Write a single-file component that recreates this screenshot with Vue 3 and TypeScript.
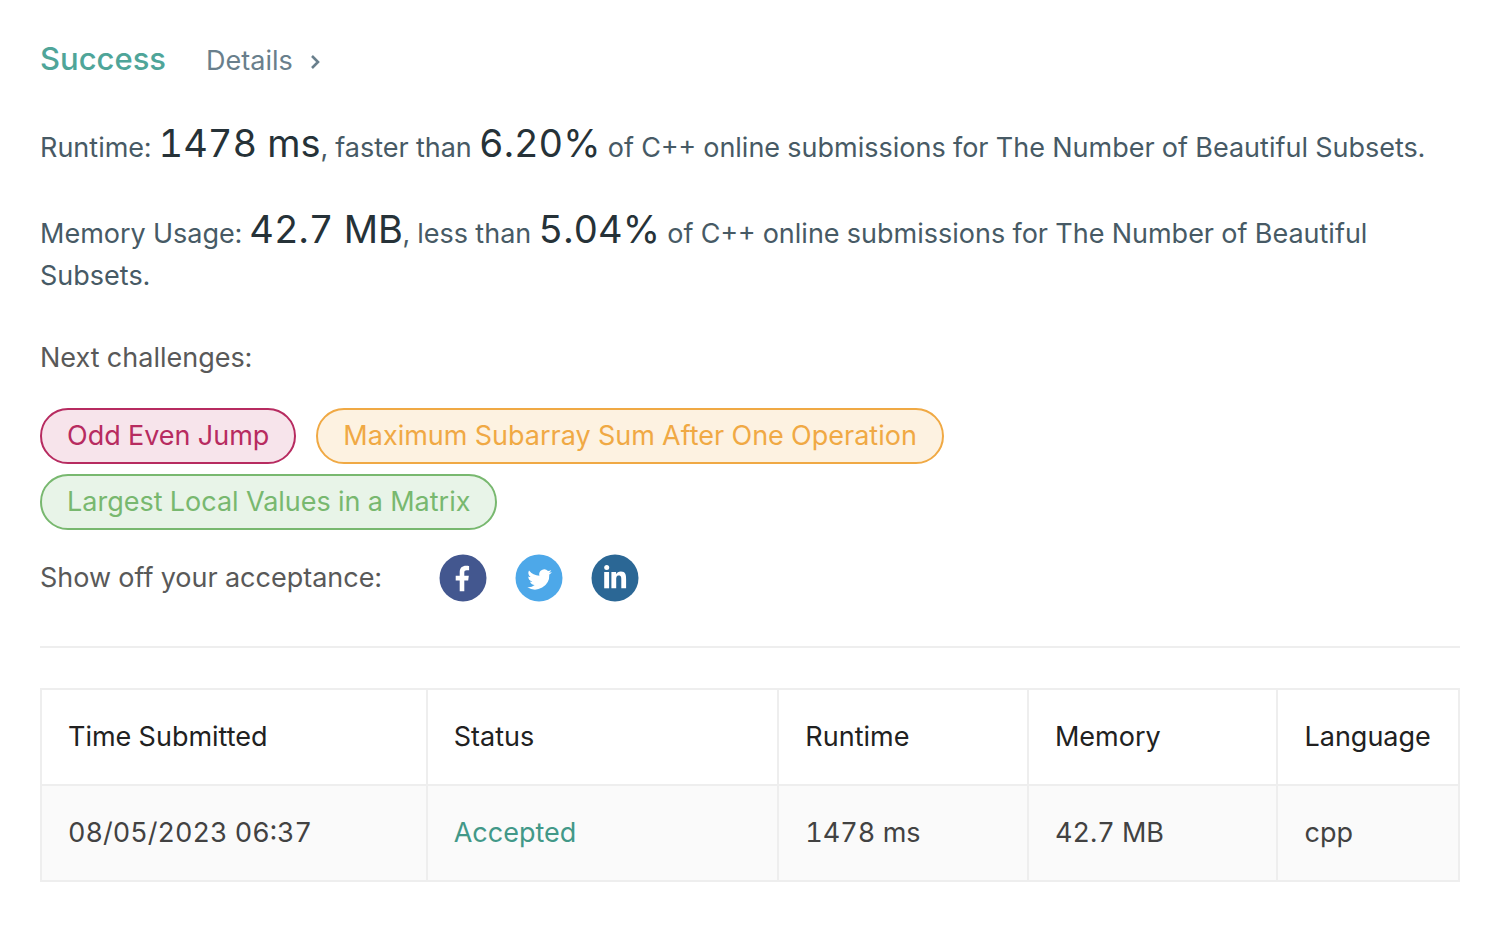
<script setup lang="ts">
interface Challenge {
  title: string
  level: 'easy' | 'medium' | 'hard'
}

interface Submission {
  time: string
  status: string
  runtime: string
  memory: string
  language: string
}

const challenges: Challenge[] = [
  { title: 'Odd Even Jump', level: 'hard' },
  { title: 'Maximum Subarray Sum After One Operation', level: 'medium' },
  { title: 'Largest Local Values in a Matrix', level: 'easy' },
]

const columns: string[] = ['Time Submitted', 'Status', 'Runtime', 'Memory', 'Language']

const submissions: Submission[] = [
  { time: '08/05/2023 06:37', status: 'Accepted', runtime: '1478 ms', memory: '42.7 MB', language: 'cpp' },
]
</script>

<template>
  <main class="result">
    <header class="heading">
      <h1 class="verdict">Success</h1>
      <a class="details" href="#details">
        Details
        <svg class="chevron" viewBox="0 0 12 16" aria-hidden="true">
          <path d="M2 2l6 6-6 6" fill="none" stroke="currentColor" stroke-width="2.6" />
        </svg>
      </a>
    </header>

    <p class="stat">
      Runtime: <span class="figure">1478 ms</span>, faster than <span class="figure">6.20%</span> of C++ online
      submissions for The Number of Beautiful Subsets.
    </p>
    <p class="stat">
      Memory Usage: <span class="figure">42.7 MB</span>, less than <span class="figure">5.04%</span> of C++ online
      submissions for The Number of Beautiful Subsets.
    </p>

    <h2 class="label">Next challenges:</h2>
    <nav class="challenges" aria-label="Next challenges">
      <a v-for="item in challenges" :key="item.title" href="#challenge" class="pill" :class="item.level">{{ item.title }}</a>
    </nav>

    <section class="share">
      <span class="label">Show off your acceptance:</span>
      <div class="networks">
        <button class="network" type="button" aria-label="Share on Facebook">
          <svg viewBox="0 0 48 48" aria-hidden="true">
            <circle cx="24" cy="24" r="23.5" fill="#43578f" />
            <path d="M20.700 37.200V26.400h-4v-4.700h4v-3.500c0-4.400 2.500-6.500 6.400-6.500 1.300 0 2.500.1 3 .2v4.300h-2.300c-1.800 0-2.500.8-2.500 2.300v3.200h4.500l-.6 4.700h-3.900v10.800z" fill="#fff" />
          </svg>
        </button>
        <button class="network" type="button" aria-label="Share on Twitter">
          <svg viewBox="0 0 48 48" aria-hidden="true">
            <circle cx="24" cy="24" r="23.5" fill="#4da8e9" />
            <path transform="translate(12.3 13.2)" d="M24.600 4.700a10 10 0 0 1-2.900.8 5 5 0 0 0 2.200-2.800 10 10 0 0 1-3.200 1.200 5 5 0 0 0-8.600 4.600A14.300 14.300 0 0 1 1.700 3.200a5 5 0 0 0 1.600 6.700 5 5 0 0 1-2.300-.6 5 5 0 0 0 4 5 5 5 0 0 1-2.300.1 5 5 0 0 0 4.700 3.500 10.100 10.100 0 0 1-7.400 2.100 14.300 14.300 0 0 0 22-12.700 10 10 0 0 0 2.600-2.600z" fill="#fff" />
          </svg>
        </button>
        <button class="network" type="button" aria-label="Share on LinkedIn">
          <svg viewBox="0 0 48 48" aria-hidden="true">
            <circle cx="24" cy="24" r="23.5" fill="#2b6795" />
            <g fill="#fff">
              <circle cx="15.7" cy="13.6" r="2.5" />
              <rect x="13.2" y="18" width="4.900" height="16.300" />
              <path d="M20.400 18h4.700v2.200c.7-1.300 2.400-2.600 4.800-2.600 4.700 0 5.200 3.400 5.200 7.300v9.400h-4.800v-8.400c0-2 0-4.300-2.400-4.300-2.500 0-2.700 2-2.700 4.200v8.500h-4.800z" />
            </g>
          </svg>
        </button>
      </div>
    </section>

    <hr class="rule" />

    <table class="submissions">
      <colgroup>
        <col class="col-time" />
        <col class="col-status" />
        <col class="col-figure" />
        <col class="col-figure" />
        <col />
      </colgroup>
      <thead>
        <tr>
          <th v-for="name in columns" :key="name" scope="col">{{ name }}</th>
        </tr>
      </thead>
      <tbody>
        <tr v-for="row in submissions" :key="row.time">
          <td>{{ row.time }}</td>
          <td><a class="accepted" href="#submission">{{ row.status }}</a></td>
          <td>{{ row.runtime }}</td>
          <td>{{ row.memory }}</td>
          <td>{{ row.language }}</td>
        </tr>
      </tbody>
    </table>
  </main>
</template>

<style>
body {
  margin: 0;
  background: #fff;
}
</style>

<style scoped>
.result {
  padding: 38px 34px 64px 40px;
  font-family: Inter, 'Liberation Sans', sans-serif;
  font-size: 27px;
  font-variant-numeric: tabular-nums;
  line-height: 42px;
  color: #424242;
}

a {
  color: inherit;
  text-decoration: none;
}

.heading {
  display: flex;
  align-items: baseline;
  gap: 40px;
}

.verdict {
  margin: 0;
  font-size: 31px;
  font-weight: 500;
  line-height: 42px;
  color: #4fa599;
}

.details {
  color: #697f8c;
}

.chevron {
  width: 12px;
  height: 16px;
  margin-left: 10px;
}

.stat {
  margin: 40px 0 0;
  color: #475a65;
}

.stat + .stat {
  margin-top: 39px;
}

.figure {
  font-size: 38px;
  color: #263238;
}

.label {
  margin: 0;
  font-size: 27px;
  font-weight: 400;
  color: #595959;
}

h2.label {
  margin-top: 40px;
}

.challenges {
  display: flex;
  flex-wrap: wrap;
  gap: 10px 20px;
  max-width: 1000px;
  margin-top: 29px;
}

.pill {
  padding: 5px 25px;
  border: 2px solid;
  border-radius: 28px;
}

.hard {
  color: #b72b60;
  background: #f7e4eb;
}

.medium {
  color: #f0a944;
  background: #fdf2e1;
}

.easy {
  color: #78b86f;
  background: #e8f4e8;
}

.share {
  display: flex;
  align-items: center;
  gap: 57px;
  margin-top: 24px;
}

.networks {
  display: flex;
  gap: 28px;
}

.network {
  width: 48px;
  height: 48px;
  padding: 0;
  border: 0;
  background: none;
  cursor: pointer;
}

.network svg {
  display: block;
}

.rule {
  height: 2px;
  margin: 44px 0 40px;
  border: 0;
  background: #eee;
}

.submissions {
  width: 100%;
  table-layout: fixed;
  border-collapse: collapse;
}

.col-time {
  width: 27.2%;
}

.col-status {
  width: 24.8%;
}

.col-figure {
  width: 17.6%;
}

th,
td {
  padding: 26px;
  border: 2px solid #eee;
  text-align: left;
  white-space: nowrap;
}

th {
  font-weight: 400;
  color: #212121;
}

td {
  background: #fafafa;
}

.accepted {
  color: #429888;
}
</style>
